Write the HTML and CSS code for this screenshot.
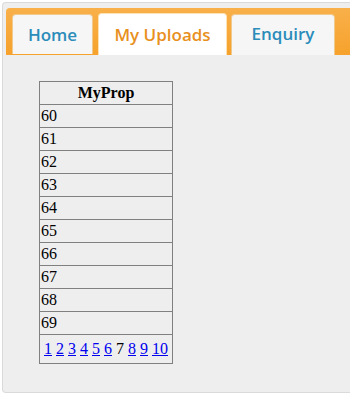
FILE: index.html
```html
<!DOCTYPE html>
<html lang="en">
<head>
    <meta charset="UTF-8">
    <title>My Uploads</title>
    <link rel="stylesheet" href="styles.css">
</head>
<body>
    <div class="panel">
        <!-- tabs -->
        <ul class="tabs">
            <li class="tab tab_home"><a href="#">Home</a></li>
            <li class="tab tab_uploads on"><a href="#">My Uploads</a></li>
            <li class="tab tab_enquiry"><a href="#">Enquiry</a></li>
        </ul>
        <!--// tabs -->
        <div class="content">
            <table class="grid">
                <tr><th>MyProp</th></tr>
                <tr><td>60</td></tr>
                <tr><td>61</td></tr>
                <tr><td>62</td></tr>
                <tr><td>63</td></tr>
                <tr><td>64</td></tr>
                <tr><td>65</td></tr>
                <tr><td>66</td></tr>
                <tr><td>67</td></tr>
                <tr><td>68</td></tr>
                <tr><td>69</td></tr>
                <tr class="pager">
                    <td>
                        <a href="#">1</a> <a href="#">2</a> <a href="#">3</a> <a href="#">4</a> <a href="#">5</a> <a href="#">6</a> <span>7</span> <a href="#">8</a> <a href="#">9</a> <a href="#">10</a>
                    </td>
                </tr>
            </table>
        </div>
    </div>
</body>
</html>
```

FILE: styles.css
```css
html, body, div, span, ul, li, table, th, td{
    margin: 0;
    padding: 0;
}
html, body{
    overflow: hidden;
    background-color: #fff;
}
ul{
    list-style: none;
}
.panel{
    width: 348px;
    height: 391px;
    margin: 2px 0 0 2px;
    padding: 5px 0 0 3px;
    box-sizing: border-box;
    border: 1px solid #dadada;
    border-right: 0;
    border-radius: 4px 0 0 4px;
    background-color: #eee;
}
.tabs{
    display: flex;
    gap: 5px;
    height: 47px;
    padding: 5px 0 0 6px;
    box-sizing: border-box;
    border-radius: 4px 0 0 0;
    background: linear-gradient(#f9b04a, #f6a22c);
}
.tab{
    display: flex;
    align-items: center;
    justify-content: center;
    flex-shrink: 0;
    height: 42px;
    padding-bottom: 1px;
    box-sizing: border-box;
    border: 1px solid #f0c98e;
    border-bottom: 0;
    border-radius: 4px 4px 0 0;
    background-color: #f6f6f6;
    font-family: "Open Sans", "DejaVu Sans", sans-serif;
    font-size: 17px;
    font-weight: 600;
}
.tab a{
    color: #2b8cba;
    text-decoration: none;
}
.tab_home{
    width: 81px;
    height: 40px;
    margin-top: 1px;
}
.tab_uploads{
    width: 129px;
}
.tab_enquiry{
    width: 104px;
    margin-left: -1px;
    height: 41px;
    margin-top: 1px;
    padding-bottom: 3px;
}
.tab.on{
    background-color: #fff;
    border-color: #fde2b5;
}
.tab.on a{
    color: #e8901e;
}
.content{
    padding: 26px 0 0 33px;
}
.grid{
    width: 134px;
    border-collapse: collapse;
    border: 1px solid #808080;
    font-family: "Liberation Serif", "Times New Roman", serif;
    font-size: 16px;
    color: #000;
}
.grid th,
.grid td{
    height: 22px;
    padding: 0 1px;
    border: 1px solid #808080;
    line-height: 22px;
    text-align: left;
}
.grid th{
    text-align: center;
    font-weight: bold;
}
.grid .pager td{
    height: 28px;
    padding: 0 0 0 4px;
    line-height: 28px;
}
.pager a{
    color: #0000ee;
}
```
